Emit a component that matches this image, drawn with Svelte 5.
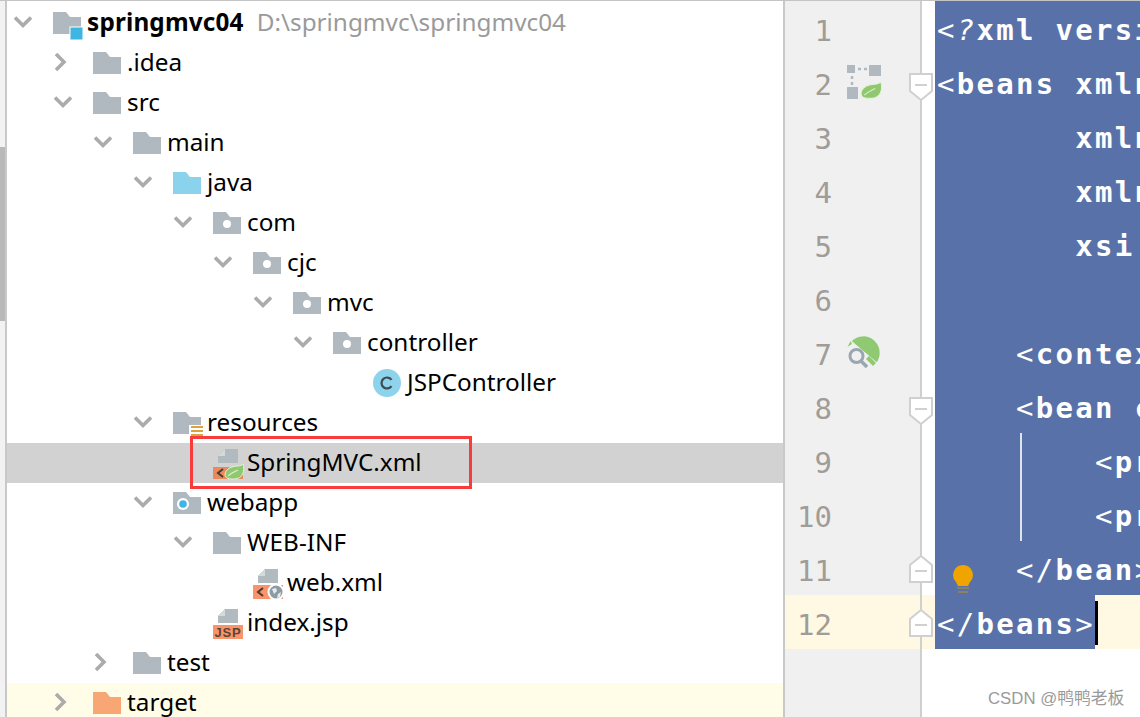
<script>
  // depth and icon for each row of the project tree
  const rows = [
    { name: 'springmvc04', hint: 'D:\\springmvc\\springmvc04', depth: 0, arrow: 'down', icon: 'root' },
    { name: '.idea', depth: 1, arrow: 'right', icon: 'folder' },
    { name: 'src', depth: 1, arrow: 'down', icon: 'folder' },
    { name: 'main', depth: 2, arrow: 'down', icon: 'folder' },
    { name: 'java', depth: 3, arrow: 'down', icon: 'source' },
    { name: 'com', depth: 4, arrow: 'down', icon: 'package' },
    { name: 'cjc', depth: 5, arrow: 'down', icon: 'package' },
    { name: 'mvc', depth: 6, arrow: 'down', icon: 'package' },
    { name: 'controller', depth: 7, arrow: 'down', icon: 'package' },
    { name: 'JSPController', depth: 8, icon: 'class' },
    { name: 'resources', depth: 3, arrow: 'down', icon: 'resources' },
    { name: 'SpringMVC.xml', depth: 4, icon: 'springxml', selected: true },
    { name: 'webapp', depth: 3, arrow: 'down', icon: 'webapp' },
    { name: 'WEB-INF', depth: 4, arrow: 'down', icon: 'folder' },
    { name: 'web.xml', depth: 5, icon: 'webxml' },
    { name: 'index.jsp', depth: 4, icon: 'jsp' },
    { name: 'test', depth: 2, arrow: 'right', icon: 'folder' },
    { name: 'target', depth: 1, arrow: 'right', icon: 'target', excluded: true }
  ];

  const lines = [
    '<?xml version="1.0"',
    '<beans xmlns="http:',
    '       xmlns:xsi="',
    '       xmlns:context',
    '       xsi:schemaLoc',
    '',
    '    <context:compone',
    '    <bean class="org',
    '        <property na',
    '        <property na',
    '    </bean>',
    '</beans>'
  ];

  // tag names are bold in the editor, the brackets around them are not
  const tokens = (text) => text.split(/([<>\/?])/).filter(Boolean);

  const folder = 'M0 0H13L17 5H28V22H0Z';
</script>

{#snippet sheet()}
  <path d="M12 0H25V14H5V7Z" fill="#b0babf" />
  <path d="M5 7L12 0V7Z" fill="#d3d9dc" />
{/snippet}

{#snippet leaf(x, y, size = 1)}
  <g transform="translate({x} {y}) scale({size})">
    <path d="M0 9C1 3 8 1 13 1C15 1 17 0 18 -1C20 6 18 14 9 14C5 14 0 14 0 9Z" fill="#8fc86e" stroke="#e4f1dc" stroke-width="1" />
    <path d="M3 11C6 8 9 7 13 5" fill="none" stroke="#d5ecc8" stroke-width="1.2" />
  </g>
{/snippet}

{#snippet treeIcon(kind)}
  <svg class="icon" width="34" height="34" viewBox="0 0 34 34">
    {#if kind === 'root'}
      <path d={folder} transform="translate(0 6)" fill="#afb9bf" />
      <rect x="17" y="21" width="13" height="13" fill="#3eb5e3" stroke="#fff" stroke-width="1" />
    {:else if kind === 'class'}
      <circle cx="14" cy="17" r="14" fill="#8ed3ec" />
      <path d="M18.5 13.8A5.5 5.5 0 1 0 18.5 20.2" fill="none" stroke="#3f4a52" stroke-width="2.2" />
    {:else if kind === 'springxml'}
      <g transform="translate(0 3)">
        {@render sheet()}
        <rect x="0" y="18" width="30" height="12" fill="#ea8a5c" />
        <path d="M10 20L5 24L10 28" fill="none" stroke="#4b3a32" stroke-width="2" />
        {@render leaf(12, 16)}
      </g>
    {:else if kind === 'webxml'}
      <g transform="translate(0 3)">
        {@render sheet()}
        <rect x="0" y="16" width="30" height="14" fill="#f9946a" />
        <path d="M10 19L5 23L10 27" fill="none" stroke="#4b3a32" stroke-width="2" />
        <circle cx="23" cy="23" r="7.5" fill="#8d9ba3" stroke="#fff" stroke-width="2" />
        <path d="M19 20L23 19L24 22L21 25ZM25 25L28 23L27 28L24 29Z" fill="#fff" opacity=".8" />
      </g>
    {:else if kind === 'jsp'}
      <g transform="translate(0 3)">
        {@render sheet()}
        <rect x="0" y="16" width="30" height="14" fill="#f9946a" />
        <text x="15" y="28" class="jsp">JSP</text>
      </g>
    {:else}
      <path
        d={folder}
        transform="translate(0 6)"
        fill={kind === 'source' ? '#8bd3ed' : kind === 'target' ? '#f9a675' : '#afb9bf'}
      />
      {#if kind === 'package'}
        <circle cx="14" cy="18" r="4" fill="#fff" />
      {:else if kind === 'webapp'}
        <circle cx="10" cy="18" r="6" fill="#fff" />
        <circle cx="10" cy="18" r="3.8" fill="#3eb5e3" />
      {:else if kind === 'resources'}
        <rect x="16" y="19" width="14" height="11" fill="#fff" />
        <path d="M18 21H30M18 25H30M18 29H30" stroke="#dca23e" stroke-width="2" />
      {/if}
    {/if}
  </svg>
{/snippet}

<div class="screen">
  <div class="edge"><div class="thumb"></div></div>

  <div class="tree">
    {#each rows as row}
      <div
        class="row"
        class:selected={row.selected}
        class:excluded={row.excluded}
        style="padding-left: {13 + row.depth * 40}px"
      >
        <span class="arrow">
          {#if row.arrow === 'down'}
            <svg width="20" height="14" viewBox="0 0 20 14"><path d="M2 1.500L10 9.500L18 1.500" /></svg>
          {:else if row.arrow === 'right'}
            <svg width="20" height="22" viewBox="0 0 20 22"><path d="M3 2L11 10L3 18" /></svg>
          {/if}
        </span>
        {@render treeIcon(row.icon)}
        <span class="name" class:root={row.icon === 'root'}>{row.name}</span>
        {#if row.hint}<span class="hint">{row.hint}</span>{/if}
      </div>
    {/each}
    <div class="outline"></div>
  </div>

  <div class="editor">
    {#each lines as text, i}
      <div class="line" class:current={i === 11}>
        <div class="gutter"><span class="num">{i + 1}</span></div>
        <div class="pad"></div>
        <pre class="code" class:last={i === 11}>{#each tokens(text) as t}<span class:thin={/[<>\/]/.test(t)} class:slant={t === '?'}>{t}</span>{/each}</pre>
        {#if i === 11}<span class="caret"></span>{/if}
      </div>
    {/each}
    <div class="rest"><div class="gutter"></div></div>

    <svg class="mark bean" width="36" height="36" viewBox="0 0 36 36">
      <rect x="0" y="0" width="8" height="8" fill="#afb9bf" />
      <rect x="22" y="0" width="12" height="11" fill="#afb9bf" />
      <rect x="0" y="22" width="11" height="12" fill="#afb9bf" />
      <path d="M11 4H20M5 11V20" stroke="#afb9bf" stroke-width="2.500" stroke-dasharray="3 3" />
      {@render leaf(14, 18, 1.1)}
    </svg>
    <svg class="mark search" width="34" height="36" viewBox="0 0 34 36">
      <path d="M4.700 6A16.500 16.500 0 0 1 29.700 27.300Z" fill="#8fca72" />
      <path d="M3.500 6L0.500 12L5 9Z" fill="#8fca72" />
      <path d="M19 24L26 31L29 28L22 21Z" fill="#8fca72" />
      <circle cx="9.500" cy="21" r="6.500" fill="none" stroke="#9aa7b0" stroke-width="3" />
      <path d="M14 26L20 32" stroke="#9aa7b0" stroke-width="3.500" />
    </svg>

    <svg class="mark fold f2" width="24" height="29" viewBox="0 0 24 29"><path d="M1 1H23V18L12 27L1 18Z" /><path class="dash" d="M6 12H18" /></svg>
    <svg class="mark fold f8" width="24" height="29" viewBox="0 0 24 29"><path d="M1 1H23V18L12 27L1 18Z" /><path class="dash" d="M6 12H18" /></svg>
    <svg class="mark fold f11" width="24" height="29" viewBox="0 0 24 29"><path d="M1 27H23V10L12 1L1 10Z" /><path class="dash" d="M6 16H18" /></svg>
    <svg class="mark fold f12" width="24" height="29" viewBox="0 0 24 29"><path d="M1 27H23V10L12 1L1 10Z" /><path class="dash" d="M6 16H18" /></svg>

    <svg class="mark bulb" width="20" height="28" viewBox="0 0 20 28">
      <path d="M10 0A10 10 0 0 1 17 17L15 21H5L3 17A10 10 0 0 1 10 0Z" fill="#f0a400" />
      <path d="M4 23H16M5 27H15" stroke="#8a8064" stroke-width="2" />
    </svg>
    <div class="guide"></div>
    <div class="mark watermark">CSDN @鸭鸭老板</div>
  </div>
</div>

<style>
  :global(body) {
    margin: 0;
    background: #fff;
  }

  .screen {
    display: flex;
    width: 1140px;
    height: 717px;
    overflow: hidden;
    border-top: 1px solid #c4c4c4;
    box-sizing: border-box;
    position: relative;
  }

  .edge {
    flex: none;
    width: 5px;
    padding-top: 146px;
    background: #f2f2f2;
    border-right: 2px solid #c8c8c8;
  }

  .thumb {
    height: 174px;
    background: #b9b9b9;
  }

  .tree {
    flex: none;
    width: 776px;
    padding-top: 2px;
    position: relative;
    overflow: hidden;
    font-family: "Noto Sans", sans-serif;
    font-size: 24.3px;
    color: #000;
  }

  .row {
    display: flex;
    align-items: center;
    height: 40px;
    margin-left: -7px;
    white-space: nowrap;
  }

  .row.selected {
    background: #d2d2d2;
  }

  .row.excluded {
    background: #fffde8;
  }

  .arrow {
    flex: none;
    display: flex;
    align-items: center;
    justify-content: center;
    width: 20px;
    margin-right: 20px;
  }

  .arrow svg path {
    fill: none;
    stroke: #ababab;
    stroke-width: 3.6;
  }

  .icon {
    flex: none;
    display: block;
  }

  .jsp {
    font: bold 13px "Liberation Sans", sans-serif;
    letter-spacing: 0.8px;
    fill: #5a4438;
    text-anchor: middle;
  }

  .name,
  .hint {
    margin-top: -4px;
  }

  .name.root {
    font-weight: 700;
    letter-spacing: 0.18px;
  }

  .hint {
    margin-left: 13px;
    color: #9a9a9a;
  }

  .outline {
    position: absolute;
    left: -7px;
    top: 0;
    margin: 435px 0 0 190px;
    width: 282px;
    height: 53px;
    box-sizing: border-box;
    border: 3px solid #f83c3c;
  }

  .editor {
    flex: none;
    width: 357px;
    display: flex;
    flex-direction: column;
    position: relative;
    font-family: "DejaVu Sans Mono", monospace;
    border-left: 2px solid #c8c8c8;
    box-sizing: border-box;
  }

  .line {
    display: flex;
    flex: none;
    height: 54px;
    background: #fff;
  }

  .line.current {
    background: #fff9e3;
  }

  .gutter {
    flex: none;
    width: 137px;
    height: 100%;
    box-sizing: border-box;
    background: #f0f0f0;
    border-right: 2px solid #cfcfcf;
    font-size: 29px;
    color: #a09c98;
  }

  .current .gutter {
    background: #fff9e3;
  }

  .num {
    display: block;
    width: 47px;
    text-align: right;
    line-height: 60px;
  }

  .pad {
    flex: none;
    width: 13px;
  }

  .code {
    flex: 1;
    min-width: 0;
    margin: 0;
    padding-left: 2px;
    background: #5872a9;
    color: #fff;
    font: 600 29px/59px "DejaVu Sans Mono", monospace;
    letter-spacing: 2.3px;
    overflow: hidden;
  }

  .thin {
    font-weight: 400;
  }

  .slant {
    font-weight: 400;
    font-style: italic;
  }

  .code.last {
    flex: none;
    box-sizing: border-box;
    width: 160px;
  }

  .caret {
    flex: none;
    width: 3px;
    height: 44px;
    margin-top: 6px;
    background: #000;
  }

  .rest {
    flex: 1;
    min-height: 0;
  }

  .mark {
    position: absolute;
  }

  .bean { left: 62px; top: 64px; }
  .search { left: 62px; top: 334px; overflow: visible; }
  .f2 { left: 124px; top: 72px; }
  .f8 { left: 124px; top: 396px; }
  .f11 { left: 124px; top: 554px; }
  .f12 { left: 124px; top: 608px; }

  .fold path {
    fill: #fff;
    stroke: #d0d0d0;
    stroke-width: 2;
  }

  .bulb { left: 168px; top: 564px; }

  .guide {
    position: absolute;
    left: 235px;
    top: 432px;
    width: 2px;
    height: 108px;
    background: #dfe3ec;
  }

  .watermark {
    left: 203px;
    top: 684px;
    font: 16.8px "Liberation Sans", "Noto Sans CJK SC", sans-serif;
    color: #9a9a9a;
    white-space: nowrap;
  }
</style>
